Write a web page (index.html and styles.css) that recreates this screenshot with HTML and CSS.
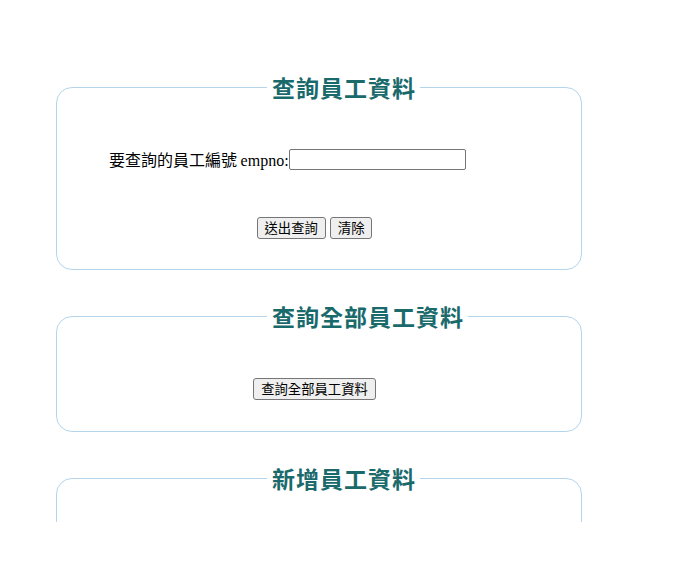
FILE: index.html
```html
<!DOCTYPE html>
<html lang="zh-Hant">
<head>
<meta charset="utf-8">
<title>員工資料</title>
<link rel="stylesheet" href="styles.css">
</head>
<body>
<div class="page">
  <fieldset class="box">
    <legend class="box-title">查詢員工資料</legend>
    <form class="query-form">
      <div class="field-row">
        <label class="field-label" for="empno">要查詢的員工編號 <span class="latin">empno:</span></label><input class="text-input" id="empno" type="text">
      </div>
      <div class="btn-row">
        <button type="button" class="btn">送出查詢</button>
        <button type="button" class="btn">清除</button>
      </div>
    </form>
  </fieldset>

  <fieldset class="box">
    <legend class="box-title">查詢全部員工資料</legend>
    <div class="btn-row btn-row-single">
      <button type="button" class="btn">查詢全部員工資料</button>
    </div>
  </fieldset>

  <fieldset class="box box-last">
    <legend class="box-title">新增員工資料</legend>
    <div class="spacer"></div>
  </fieldset>
</div>
</body>
</html>
```
FILE: styles.css
```css
html, body {
  margin: 0;
  padding: 0;
  background: #ffffff;
}

body {
  font-family: "Liberation Serif", "Noto Sans CJK TC", serif;
  font-size: 16px;
  color: #000;
}

.page {
  height: 522px;
  overflow: hidden;
  padding: 73px 0 0 56px;
  box-sizing: border-box;
}

.box {
  box-sizing: border-box;
  width: 526px;
  margin: 0 0 32px 0;
  padding: 0 52px 30px 52px;
  border: 1px solid #b4d5ec;
  border-radius: 16px;
  min-inline-size: 0;
}

.box-title {
  margin-left: 158px;
  padding: 0 4px 0 5px;
  font-family: "Noto Sans CJK TC", sans-serif;
  font-weight: bold;
  font-size: 23px;
  line-height: 28px;
  letter-spacing: 1px;
  color: #1a6a6c;
}

.query-form {
  margin: 0;
  padding-top: 48px;
}

.field-row {
  display: flex;
  align-items: center;
  height: 21px;
}

.field-label {
  font-family: "Noto Sans CJK TC", sans-serif;
  font-size: 16px;
  line-height: 21px;
}

.latin {
  font-family: "Liberation Serif", serif;
}

.text-input {
  box-sizing: border-box;
  width: 177px;
  height: 21px;
  margin: 0;
  padding: 1px 2px;
  border: 1px solid #767676;
  border-radius: 2px;
  font-size: 13.33px;
}

.btn-row {
  display: flex;
  justify-content: center;
  gap: 4px;
  margin-top: 47px;
  padding-right: 9px;
}

.btn-row-single {
  margin-top: 0;
  padding-top: 48px;
  padding-bottom: 1px;
}

.btn {
  box-sizing: border-box;
  height: 22px;
  margin: 0;
  padding: 1px 7px;
  border: 1px solid #767676;
  border-radius: 3px;
  background: #efefef;
  font-family: "Noto Sans CJK TC", sans-serif;
  font-size: 13.33px;
  line-height: 18px;
  color: #000;
}

.spacer {
  height: 60px;
}
```
